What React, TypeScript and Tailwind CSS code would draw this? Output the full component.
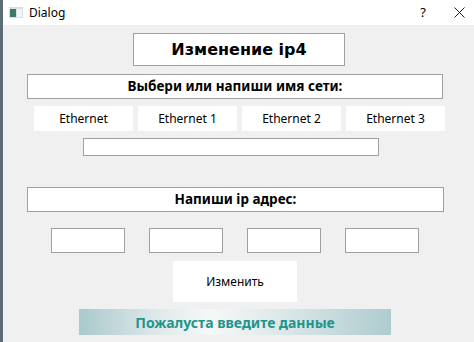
export default function App() {
  const nets = ["Ethernet", "Ethernet 1", "Ethernet 2", "Ethernet 3"];

  return (
    <div className="flex h-[342px] w-[474px] bg-white font-['DejaVu_Sans',sans-serif] text-black">
      <div className="w-[3px] bg-[#5b6b78]" />
      <div className="flex flex-1 flex-col">
        {/* title bar */}
        <div className="flex h-[25px] items-center bg-white pl-[6px] text-[12px]">
          <svg width="14" height="11" viewBox="0 0 14 11" className="mr-[6px]">
            <rect x="0" y="0" width="14" height="11" fill="#d8e0e5" />
            <rect x="1" y="2" width="6" height="8" fill="#3d7a6a" />
            <rect x="8" y="2" width="5" height="8" fill="#f4f4f4" />
          </svg>
          <span className="font-['Noto_Sans',sans-serif] text-[12px]">Dialog</span>
          <span className="ml-auto mr-[28px] font-['Noto_Sans',sans-serif] text-[13px]">?</span>
          <svg width="11" height="11" viewBox="0 0 11 11" className="mr-[9px]">
            <path d="M0.5 0.5 L10.5 10.5 M10.5 0.5 L0.5 10.5" stroke="#222" strokeWidth="1" />
          </svg>
        </div>

        {/* content */}
        <div className="flex flex-1 flex-col bg-[#f0f0f0] pt-[8px]">
          <div className="ml-[130px] flex h-[33px] w-[212px] items-center justify-center border border-[#a0a0a0] bg-white text-[16px] font-bold">
            Изменение ip4
          </div>

          <div className="ml-[24px] mt-[8px] flex h-[25px] w-[416px] items-center justify-center border border-[#a0a0a0] bg-white font-['Noto_Sans',sans-serif] text-[13.5px] font-bold">
            Выбери или напиши имя сети:
          </div>

          <div className="ml-[31px] mt-[7px] flex gap-[5px]">
            {nets.map((n) => (
              <button
                key={n}
                className="flex h-[25px] w-[99px] items-center justify-center bg-white font-['Noto_Sans',sans-serif] text-[12px]"
              >
                {n}
              </button>
            ))}
          </div>

          <input className="ml-[80px] mt-[7px] h-[18px] w-[296px] border border-[#a0a0a0] bg-white outline-none" />

          <div className="ml-[24px] mt-[31px] flex h-[25px] w-[417px] items-center justify-center border border-[#a0a0a0] bg-white font-['Noto_Sans',sans-serif] text-[13.5px] font-bold">
            Напиши ip адрес:
          </div>

          <div className="ml-[48px] mt-[16px] flex gap-[24px]">
            {[0, 1, 2, 3].map((i) => (
              <input
                key={i}
                className="h-[25px] w-[74px] border border-[#a0a0a0] bg-white outline-none"
              />
            ))}
          </div>

          <button className="ml-[170px] mt-[8px] flex h-[41px] w-[124px] items-center justify-center bg-white font-['Noto_Sans',sans-serif] text-[12px]">
            Изменить
          </button>

          <div className="ml-[76px] mt-[7px] flex h-[26px] w-[312px] items-center justify-center bg-[linear-gradient(90deg,#a9c9cc_0%,#dfe9ea_25%,#f6f8f8_42%,#dce8e9_65%,#aecccf_100%)] font-['Noto_Sans',sans-serif] text-[14px] font-bold text-[#1f958c]">
            Пожалуста введите данные
          </div>
        </div>
      </div>
    </div>
  );
}
